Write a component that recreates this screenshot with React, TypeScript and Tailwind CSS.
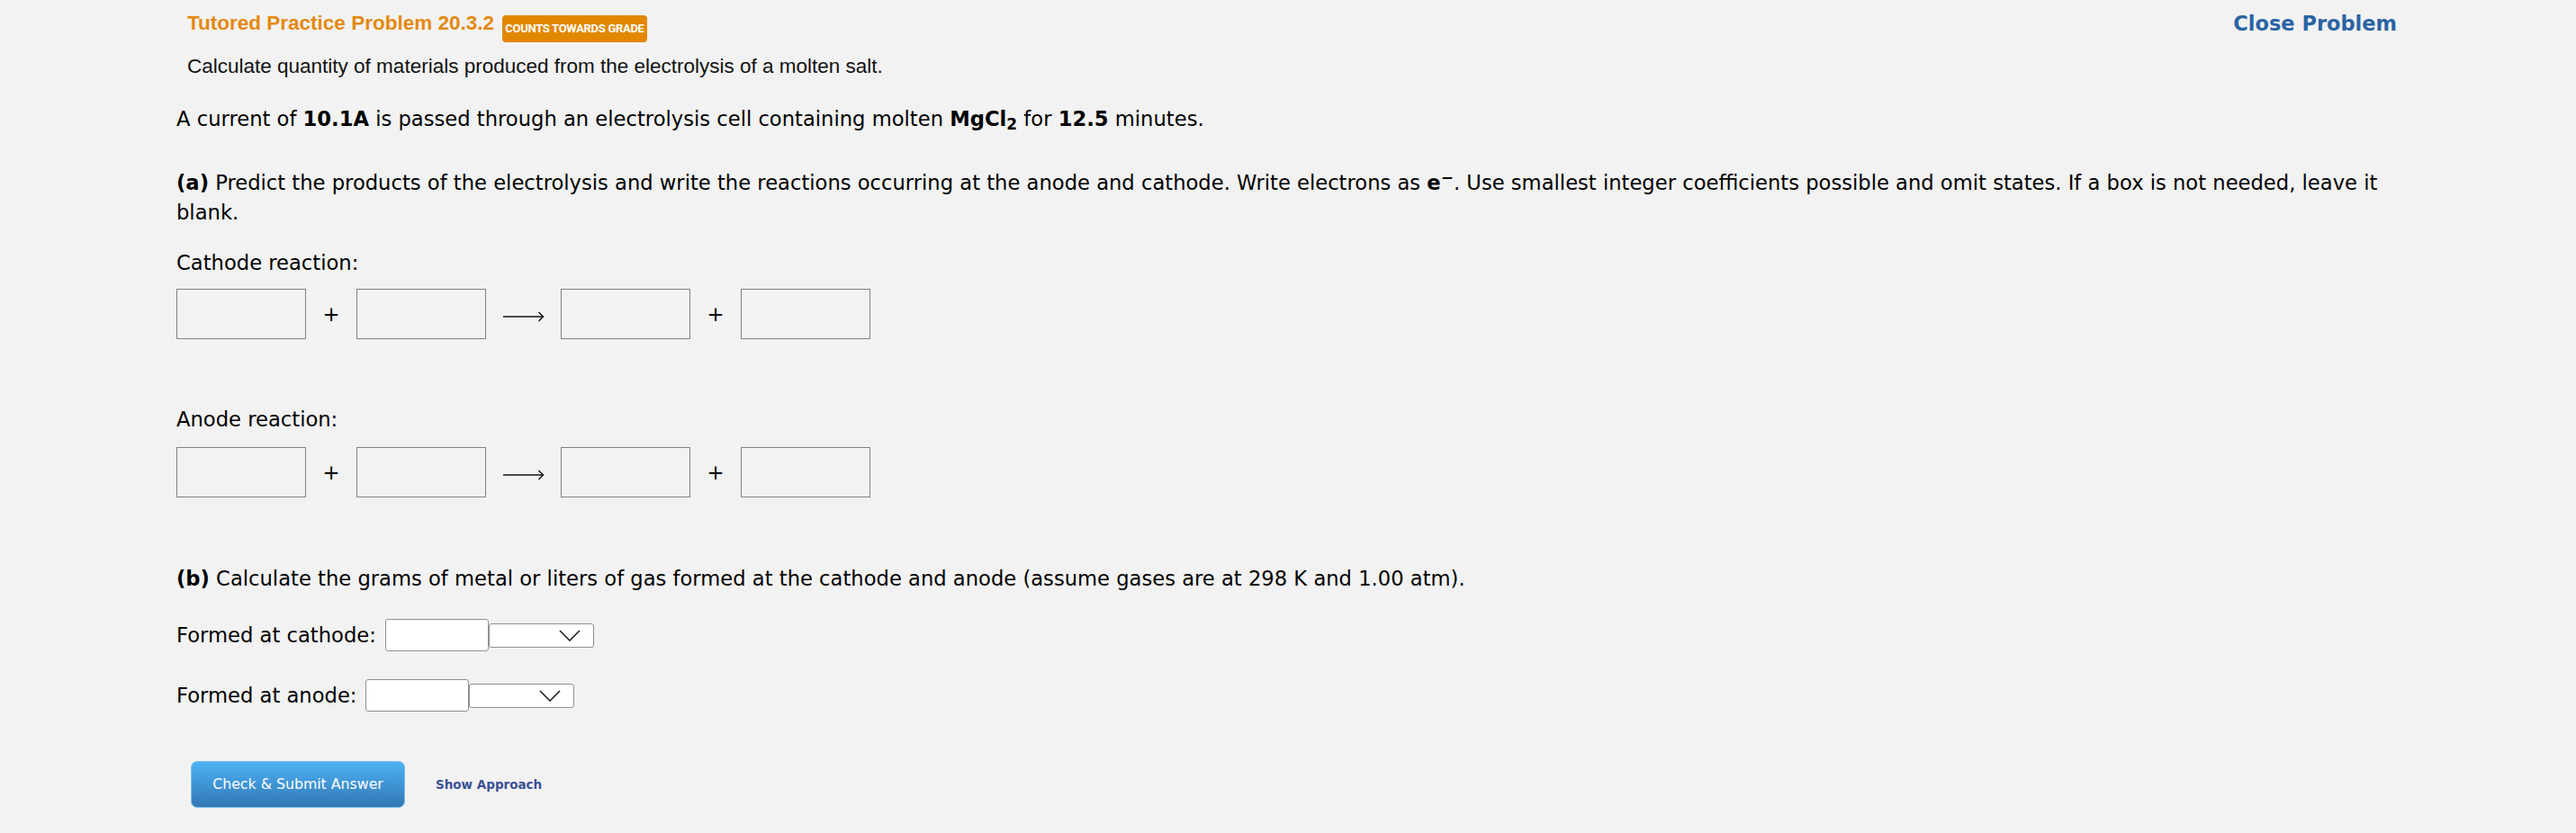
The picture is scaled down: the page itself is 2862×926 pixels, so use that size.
import React from "react";

const body = "font-['DejaVu_Sans',Verdana,sans-serif]";
const arial = "font-['Liberation_Sans',Arial,sans-serif]";

function Box() {
  return <input type="text" className="w-[144px] h-[56px] border border-[#818181] bg-transparent outline-none" />;
}

function Arrow() {
  return (
    <svg width="46" height="14" viewBox="0 0 46 14" fill="none" className="mt-[6px]">
      <line x1="0" y1="7" x2="44.5" y2="7" stroke="#111" strokeWidth="1.4" />
      <polyline points="39.5,2 44.5,7 39.5,12" stroke="#111" strokeWidth="1.4" />
    </svg>
  );
}

function ReactionRow() {
  return (
    <div className="flex items-center text-[22.75px] text-black">
      <Box />
      <span className="w-[56px] text-center">+</span>
      <Box />
      <span className="w-[83px] flex justify-center">
        <Arrow />
      </span>
      <Box />
      <span className="w-[56px] text-center">+</span>
      <Box />
    </div>
  );
}

function AnswerRow({ label }: { label: string }) {
  return (
    <div className="flex items-center">
      <span className="mr-[10px]">{label}</span>
      <input
        type="text"
        className="w-[115px] h-[36px] border border-[#8f8f8f] rounded-[3px] bg-white outline-none"
      />
      <div className="w-[117px] h-[27px] border border-[#8f8f8f] rounded-[3px] bg-white flex items-center justify-end pr-[14px]">
        <svg width="24" height="13" viewBox="0 0 24 13" fill="none">
          <polyline points="1,1 12,12 23,1" stroke="#222" strokeWidth="1.6" />
        </svg>
      </div>
    </div>
  );
}

export default function App() {
  return (
    <div className="min-h-[926px] bg-[#f2f2f2]">
      <div className={`mx-auto w-[2470px] pt-[10px] text-black ${body}`}>

        {/* Header */}
        <div className="flex items-start justify-between">
          <div className="pl-[12px]">
            <div className="flex items-start">
              <h1 className={`text-[22.5px] leading-[32px] font-bold text-[#e3890f] ${arial}`}>
                Tutored Practice Problem 20.3.2
              </h1>
              <span className="ml-[9px] mt-[7px] h-[30px] w-[161px] rounded-[4px] bg-[#e28800] text-white text-[13px] font-bold tracking-[-0.3px] flex items-center justify-center font-['Roboto',sans-serif]">
                COUNTS TOWARDS GRADE
              </span>
            </div>
            <p className={`mt-[11px] text-[22.5px] leading-[32px] text-[#111] ${arial}`}>
              Calculate quantity of materials produced from the electrolysis of a molten salt.
            </p>
          </div>
          <a className="mr-[3px] text-[22.5px] leading-[32px] font-bold text-[#2a64a2]">Close Problem</a>
        </div>

        {/* Problem */}
        <div className="text-[22.65px] leading-[33px]">
          <p className="mt-[26px]">
            A current of <b>10.1A</b> is passed through an electrolysis cell containing molten{" "}
            <b>MgCl<sub>2</sub></b> for <b>12.5</b> minutes.
          </p>

          <p className="mt-[38px]">
            <b>(a)</b> Predict the products of the electrolysis and write the reactions occurring at the anode and
            cathode. Write electrons as <b>e<sup>−</sup></b>. Use smallest integer coefficients possible and omit
            states. If a box is not needed, leave it blank.
          </p>

          <p className="mt-[23px]">Cathode reaction:</p>
          <div className="mt-[12px]">
            <ReactionRow />
          </div>

          <p className="mt-[73px]">Anode reaction:</p>
          <div className="mt-[14px]">
            <ReactionRow />
          </div>

          <p className="mt-[74px]">
            <b>(b)</b> Calculate the grams of metal or liters of gas formed at the cathode and anode (assume gases are
            at 298 K and 1.00 atm).
          </p>

          <div className="mt-[28px]">
            <AnswerRow label="Formed at cathode:" />
          </div>
          <div className="mt-[31px]">
            <AnswerRow label="Formed at anode:" />
          </div>

          {/* Actions */}
          <div className="mt-[55px] ml-[16px] flex items-center">
            <button className="w-[238px] h-[52px] rounded-[7px] border border-[#79bdeb] bg-gradient-to-b from-[#4cb2f4] to-[#3377b5] text-white text-[15.75px] leading-none">
              Check &amp; Submit Answer
            </button>
            <a className="ml-[34px] text-[13.5px] font-bold text-[#3a4f94]">Show Approach</a>
          </div>
        </div>
      </div>
    </div>
  );
}
